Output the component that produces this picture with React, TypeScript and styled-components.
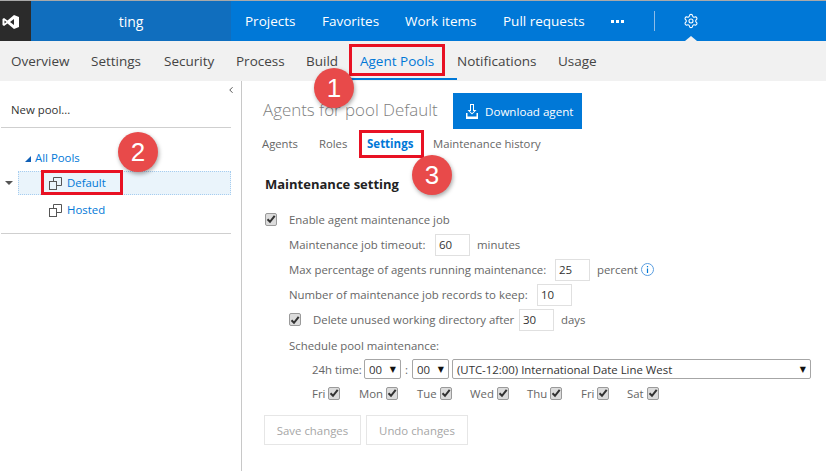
import React from 'react';
import styled, { createGlobalStyle } from 'styled-components';
import { Settings as GearIcon, ChevronLeft } from 'lucide-react';

const GlobalStyle = createGlobalStyle`
  html, body { margin: 0; padding: 0; background: #fff; }
  body { font-family: "Open Sans", "Liberation Sans", sans-serif; font-size: 11.4px; color: #666; }
  * { box-sizing: border-box; }
`;

const navItems = [
  { label: 'Projects', width: 77 },
  { label: 'Favorites', width: 83 },
  { label: 'Work items', width: 98 },
  { label: 'Pull requests', width: 108 },
];
const adminTabs = [
  { label: 'Overview', width: 80 },
  { label: 'Settings', width: 73 },
  { label: 'Security', width: 72 },
  { label: 'Process', width: 70 },
  { label: 'Build', width: 54 },
  { label: 'Agent Pools', width: 97, active: true },
  { label: 'Notifications', width: 101 },
  { label: 'Usage', width: 60 },
];
const poolTabs = [
  { label: 'Agents', width: 57 },
  { label: 'Roles', width: 48 },
  { label: 'Settings', width: 66, active: true },
  { label: 'Maintenance history', width: 130 },
];
const days = [
  { label: 'Fri', width: 47 },
  { label: 'Mon', width: 58 },
  { label: 'Tue', width: 53 },
  { label: 'Wed', width: 57 },
  { label: 'Thu', width: 54 },
  { label: 'Fri', width: 46 },
  { label: 'Sat', width: 40 },
];

const LogoIcon = () => (
  <svg width="17" height="14" viewBox="0 0 17 14">
    <path
      fill="#fff"
      fillRule="evenodd"
      d="M12 0l5 2v10l-5 2-6.500-5.500L2 11 .5 10V4L2 3l3.500 2.500zM12 4 8 7l4 3zM2.500 5.500v3L4.500 7z"
    />
  </svg>
);

const PoolIcon = () => (
  <svg width="13" height="13" viewBox="0 0 13 13" fill="none" stroke="#555" strokeWidth="1">
    <path d="M4.500 4.500v-4h8v8h-5" />
    <rect x="0.500" y="4.500" width="7" height="8" />
  </svg>
);

const DownloadIcon = () => (
  <svg width="12" height="15" viewBox="0 0 12 15" fill="#fff">
    <path d="M4 0h4v6h2.500L6 10.500 1.500 6H4zM5 1v6H3.800L6 9.200 8.200 7H7V1z" />
    <path d="M0 9h1.500v3.500h9V9H12v6H0z" />
  </svg>
);

const Tick = () => (
  <svg width="10" height="10" viewBox="0 0 10 10">
    <path d="M1.500 5.200 4 7.800 8.700 1.800" fill="none" stroke="#333" strokeWidth="2" />
  </svg>
);

const InfoIcon = () => (
  <svg width="13" height="13" viewBox="0 0 13 13" fill="none">
    <circle cx="6.500" cy="6.500" r="6" stroke="#5a9ee0" />
    <path d="M6.500 5.500v4.500M6.500 3v1.300" stroke="#0078d7" strokeWidth="1.200" />
  </svg>
);

const App = () => (
  <Page>
    <GlobalStyle />
    <TopLine />
    <Header>
      <LogoBox><LogoIcon /></LogoBox>
      <ProjectName>ting</ProjectName>
      <NavList>
        {navItems.map(item => (
          <NavItem key={item.label} $width={item.width}>{item.label}</NavItem>
        ))}
        <Dots><i /><i /><i /></Dots>
        <NavSeparator />
        <GearBox><GearIcon size={16} strokeWidth={1.6} color="#fff" /></GearBox>
      </NavList>
    </Header>
    <AdminBar>
      {adminTabs.map(tab => (
        <AdminTab key={tab.label} $width={tab.width} $active={tab.active}>{tab.label}</AdminTab>
      ))}
    </AdminBar>
    <Body>
      <LeftPane>
        <CollapseButton><ChevronLeft size={10} strokeWidth={2} color="#333" /></CollapseButton>
        <NewPool>New pool...</NewPool>
        <TreeArea>
          <TreeRoot><RootArrow />All Pools</TreeRoot>
          <TreeRow $selected>
            <RowArrow />
            <PoolIcon />
            <PoolLink>Default</PoolLink>
          </TreeRow>
          <TreeRow>
            <PoolIcon />
            <PoolLink>Hosted</PoolLink>
          </TreeRow>
        </TreeArea>
      </LeftPane>
      <RightPane>
        <TitleRow>
          <PageTitle>Agents for pool Default</PageTitle>
          <PrimaryButton><DownloadIcon />Download agent</PrimaryButton>
        </TitleRow>
        <PoolTabs>
          {poolTabs.map(tab => (
            <PoolTab key={tab.label} $width={tab.width} $active={tab.active}>{tab.label}</PoolTab>
          ))}
        </PoolTabs>
        <SectionTitle>Maintenance setting</SectionTitle>
        <EnableRow><Check><Tick /></Check><EnableLabel>Enable agent maintenance job</EnableLabel></EnableRow>
        <Options>
          <FieldRow>
            <FieldLabel $width={146}>Maintenance job timeout:</FieldLabel>
            <NumberBox readOnly value="60" />
            <Unit>minutes</Unit>
          </FieldRow>
          <FieldRow>
            <FieldLabel $width={266}>Max percentage of agents running maintenance:</FieldLabel>
            <NumberBox readOnly value="25" />
            <Unit>percent</Unit>
            <InfoWrap><InfoIcon /></InfoWrap>
          </FieldRow>
          <FieldRow>
            <FieldLabel $width={248}>Number of maintenance job records to keep:</FieldLabel>
            <NumberBox readOnly value="10" />
          </FieldRow>
          <FieldRow>
            <Check><Tick /></Check>
            <FieldLabel $width={206} $inset={12}>Delete unused working directory after</FieldLabel>
            <NumberBox readOnly value="30" />
            <Unit>days</Unit>
          </FieldRow>
          <ScheduleTitle>Schedule pool maintenance:</ScheduleTitle>
          <ScheduleBlock>
            <TimeRow>
              <TimeLabel>24h time:</TimeLabel>
              <SelectBox $width={37}>00<Caret>▼</Caret></SelectBox>
              <TimeColon>:</TimeColon>
              <SelectBox $width={37}>00<Caret>▼</Caret></SelectBox>
              <SelectBox $width={359} $gap={3}>(UTC-12:00) International Date Line West<Caret>▼</Caret></SelectBox>
            </TimeRow>
            <DayRow>
              {days.map((day, i) => (
                <DayItem key={i} $width={day.width}>{day.label}<Check><Tick /></Check></DayItem>
              ))}
            </DayRow>
          </ScheduleBlock>
        </Options>
        <Actions>
          <DisabledButton $width={97}>Save changes</DisabledButton>
          <DisabledButton $width={102}>Undo changes</DisabledButton>
        </Actions>
      </RightPane>
    </Body>

    <Outline $x={349} $y={44} $w={96} $h={32} />
    <Outline $x={41} $y={170} $w={82} $h={25} />
    <Outline $x={359} $y={130} $w={65} $h={28} />
    <Badge $x={314} $y={68}>1</Badge>
    <Badge $x={118} $y={132}>2</Badge>
    <Badge $x={412} $y={155}>3</Badge>
  </Page>
);

const Page = styled.div`
  position: relative;
  width: 826px;
  height: 471px;
  overflow: hidden;
  display: flex;
  flex-direction: column;
`;

const TopLine = styled.div`
  height: 1px;
  background: #a9a9a9;
`;

const Header = styled.header`
  height: 40px;
  display: flex;
  background: #0078d7;
  color: #fff;
`;

const LogoBox = styled.div`
  width: 31px;
  background: #2b2b2b;
  display: flex;
  align-items: center;
  padding: 2px 0 0 2px;
`;

const ProjectName = styled.div`
  width: 200px;
  background: #106ebe;
  font-size: 14px;
  display: flex;
  align-items: center;
  justify-content: center;
`;

const NavList = styled.nav`
  display: flex;
  align-items: center;
  padding-left: 14px;
  flex: 1;
`;

const NavItem = styled.div<{ $width: number }>`
  width: ${({ $width }) => $width}px;
  font-size: 13.500px;
  white-space: nowrap;
`;

const Dots = styled.div`
  display: flex;
  gap: 2px;
  i { width: 3px; height: 3px; background: #fff; display: block; }
`;

const NavSeparator = styled.div`
  width: 1px;
  height: 20px;
  background: #8dbce8;
  margin-left: 30px;
`;

const GearBox = styled.div`
  position: relative;
  margin-left: 28px;
  height: 100%;
  display: flex;
  align-items: center;
  &::after {
    content: '';
    position: absolute;
    left: 2px;
    bottom: 0;
    border: 6px solid transparent;
    border-top: 0;
    border-bottom: 5px solid #f1f1f1;
  }
`;

const AdminBar = styled.div`
  height: 40px;
  display: flex;
  background: #f1f1f1;
  padding-left: 11px;
`;

const AdminTab = styled.div<{ $width: number; $active?: boolean }>`
  width: ${({ $width }) => $width}px;
  font-size: 13.500px;
  line-height: 40px;
  white-space: nowrap;
  color: ${({ $active }) => ($active ? '#0078d7' : '#444')};
  position: relative;
  &::after {
    content: '';
    display: ${({ $active }) => ($active ? 'block' : 'none')};
    position: absolute;
    left: -11px;
    right: 0;
    top: 37px;
    height: 2px;
    background: #0078d7;
  }
`;

const Body = styled.main`
  flex: 1;
  display: flex;
  min-height: 0;
`;

const LeftPane = styled.aside`
  position: relative;
  width: 242px;
  border-right: 1px solid #c8c8c8;
  padding-right: 10px;
`;

const CollapseButton = styled.div`
  position: absolute;
  left: 226px;
  top: 4px;
  display: flex;
`;

const NewPool = styled.div`
  height: 47px;
  padding: 20px 0 0 10px;
  margin-left: 1px;
  color: #333;
  line-height: 18px;
  border-bottom: 1px solid #cfcfcf;
`;

const TreeArea = styled.div`
  padding-top: 21px;
  height: 106px;
  margin-left: 1px;
  border-bottom: 1px solid #cfcfcf;
`;

const TreeRoot = styled.div`
  height: 22px;
  line-height: 18px;
  padding-left: 34px;
  color: #0078d7;
  position: relative;
`;

const RootArrow = styled.span`
  position: absolute;
  left: 24px;
  top: 7px;
  width: 0;
  height: 0;
  border-left: 6px solid transparent;
  border-bottom: 6px solid #0f5fb5;
`;

const TreeRow = styled.div<{ $selected?: boolean }>`
  position: relative;
  height: 24px;
  margin-left: 17px;
  padding-left: 30px;
  display: flex;
  align-items: center;
  gap: 5px;
  border: 1px dotted ${({ $selected }) => ($selected ? '#a6cdf0' : 'transparent')};
  background: ${({ $selected }) => ($selected ? '#eaf4fb' : 'transparent')};
  margin-bottom: ${({ $selected }) => ($selected ? '3px' : '0')};
`;

const RowArrow = styled.span`
  position: absolute;
  left: -14px;
  top: 9px;
  border: 4px solid transparent;
  border-top: 4px solid #555;
  border-bottom: 0;
`;

const PoolLink = styled.span`
  color: #0078d7;
  line-height: 18px;
`;

const RightPane = styled.section`
  flex: 1;
  padding: 12px 0 0 21px;
`;

const TitleRow = styled.div`
  display: flex;
  align-items: center;
  gap: 15px;
  height: 36px;
`;

const PageTitle = styled.h1`
  margin: 0;
  width: 175px;
  padding-bottom: 4px;
  font-size: 16.900px;
  font-weight: 300;
  color: #808080;
  white-space: nowrap;
`;

const PrimaryButton = styled.div`
  width: 129px;
  height: 36px;
  background: #0078d7;
  color: #fff;
  display: flex;
  align-items: center;
  padding-left: 13px;
  gap: 7px;
  font-size: 11.600px;
`;

const PoolTabs = styled.div`
  display: flex;
  margin: 6px 0 0 -1px;
  height: 18px;
`;

const PoolTab = styled.div<{ $width: number; $active?: boolean }>`
  width: ${({ $width }) => $width}px;
  line-height: 18px;
  white-space: nowrap;
  font-size: ${({ $active }) => ($active ? '11.500px' : '11.300px')};
  font-weight: ${({ $active }) => ($active ? 700 : 400)};
  color: ${({ $active }) => ($active ? '#0078d7' : '#666')};
`;

const SectionTitle = styled.h2`
  margin: 21px 0 0 2px;
  font-size: 13px;
  line-height: 20px;
  font-weight: 700;
  color: #222;
`;

const Check = styled.span`
  width: 12px;
  height: 13px;
  flex: none;
  display: inline-flex;
  align-items: center;
  justify-content: center;
  background: #dcdcdc;
  border: 1px solid #9a9a9a;
  border-radius: 2px;
`;

const EnableRow = styled.div`
  display: flex;
  align-items: center;
  height: 18px;
  margin: 16px 0 0 2px;
`;

const EnableLabel = styled.span`
  margin-left: 12px;
  white-space: nowrap;
`;

const Options = styled.div`
  margin: 4px 0 0 26px;
`;

const FieldRow = styled.div`
  height: 25px;
  display: flex;
  align-items: center;
`;

const FieldLabel = styled.span<{ $width: number; $inset?: number }>`
  width: ${({ $width }) => $width}px;
  margin-left: ${({ $inset }) => $inset ?? 0}px;
  white-space: nowrap;
`;

const NumberBox = styled.input`
  width: 35px;
  height: 22px;
  border: 1px solid #e0e0e0;
  padding: 0 3px;
  font: 11.500px "Open Sans", "Liberation Sans", sans-serif;
  color: #333;
  outline: none;
`;

const Unit = styled.span`
  margin-left: 7px;
`;

const InfoWrap = styled.span`
  display: flex;
  margin-left: 3px;
`;

const ScheduleTitle = styled.div`
  margin-top: 5px;
  line-height: 18px;
`;

const ScheduleBlock = styled.div`
  padding-left: 23px;
`;

const TimeRow = styled.div`
  margin-top: 4px;
  display: flex;
  align-items: center;
  height: 20px;
`;

const TimeLabel = styled.span`
  width: 52px;
  white-space: nowrap;
`;

const SelectBox = styled.div<{ $width: number; $gap?: number }>`
  width: ${({ $width }) => $width}px;
  height: 20px;
  margin-left: ${({ $gap }) => $gap ?? 0}px;
  border: 1px solid #a6a6a6;
  border-radius: 2px;
  padding: 0 4px;
  display: flex;
  align-items: center;
  justify-content: space-between;
  white-space: nowrap;
  color: #333;
  background: #fff;
`;

const Caret = styled.span`
  font-size: 8px;
  color: #111;
  font-family: "DejaVu Sans", sans-serif;
`;

const TimeColon = styled.span`
  width: 11px;
  text-align: center;
`;

const DayRow = styled.div`
  display: flex;
  height: 18px;
  margin-top: 5px;
`;

const DayItem = styled.div<{ $width: number }>`
  width: ${({ $width }) => $width}px;
  display: flex;
  align-items: center;
  gap: 3px;
`;

const Actions = styled.div`
  display: flex;
  gap: 5px;
  margin: 13px 0 0 1px;
`;

const DisabledButton = styled.div<{ $width: number }>`
  width: ${({ $width }) => $width}px;
  height: 30px;
  border: 1px solid #e6e6e6;
  display: flex;
  align-items: center;
  justify-content: center;
  color: #a6a6a6;
`;

const Outline = styled.div<{ $x: number; $y: number; $w: number; $h: number }>`
  position: absolute;
  left: ${({ $x }) => $x}px;
  top: ${({ $y }) => $y}px;
  width: ${({ $w }) => $w}px;
  height: ${({ $h }) => $h}px;
  border: 3px solid #e81123;
`;

const Badge = styled.div<{ $x: number; $y: number }>`
  position: absolute;
  left: ${({ $x }) => $x}px;
  top: ${({ $y }) => $y}px;
  width: 40px;
  height: 40px;
  border-radius: 50%;
  background: #e84a4a;
  box-shadow: 1px 2px 4px rgba(0, 0, 0, 0.35);
  color: #fff;
  font: 26px/40px "Liberation Sans", Arial, sans-serif;
  text-align: center;
`;

export default App;
